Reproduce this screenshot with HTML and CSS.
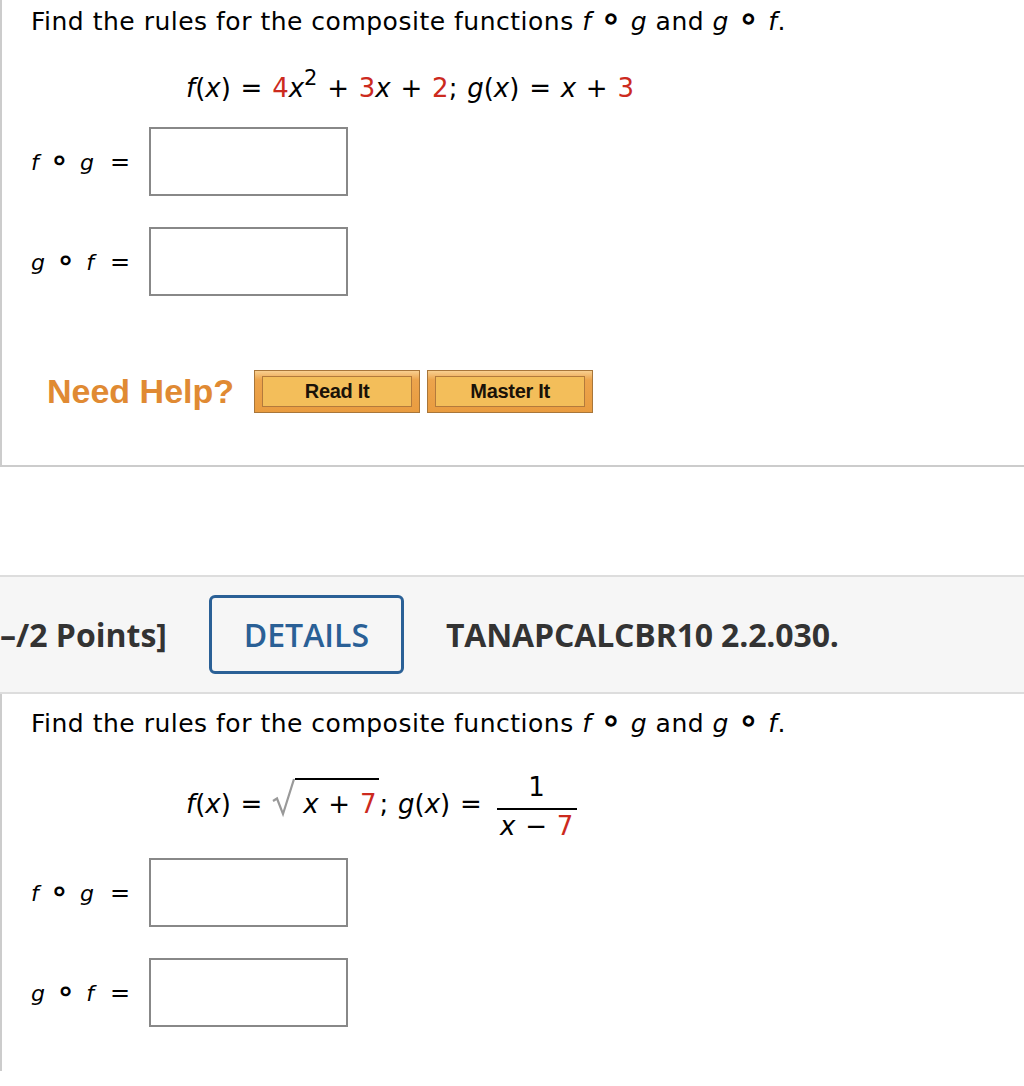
FILE: index.html
```html
<!DOCTYPE html>
<html lang="en">
<head>
  <meta charset="UTF-8" />
  <meta name="viewport" content="width=device-width, initial-scale=1" />
  <title>Composite functions</title>
  <link rel="stylesheet" href="styles.css">
</head>
<body>
  <div class="panel panel-first">
    <p class="prompt">Find the rules for the composite functions <i>f</i> <span class="ring">∘</span> <i>g</i> and <i>g</i> <span class="ring">∘</span> <i>f</i>.</p>

    <div class="formula">
      <i>f</i>(<i>x</i>) = <span class="red">4</span><i>x</i><sup>2</sup> + <span class="red">3</span><i>x</i> + <span class="red">2</span>; <i>g</i>(<i>x</i>) = <i>x</i> + <span class="red">3</span>
    </div>

    <div class="answers">
      <div class="answer-row">
        <span class="lbl"><i>f</i> <span class="ring">∘</span> <i>g</i> <span class="eq">=</span></span>
        <span class="box"></span>
      </div>
      <div class="answer-row">
        <span class="lbl"><i>g</i> <span class="ring">∘</span> <i>f</i> <span class="eq">=</span></span>
        <span class="box"></span>
      </div>
    </div>

    <div class="help">
      <span class="help-label">Need Help?</span>
      <button class="help-btn"><span>Read It</span></button>
      <button class="help-btn"><span>Master It</span></button>
    </div>
  </div>

  <div class="qhead">
    <span class="points">–/2 Points]</span>
    <button class="details">DETAILS</button>
    <span class="qid">TANAPCALCBR10 2.2.030.</span>
  </div>

  <div class="panel panel-second">
    <p class="prompt">Find the rules for the composite functions <i>f</i> <span class="ring">∘</span> <i>g</i> and <i>g</i> <span class="ring">∘</span> <i>f</i>.</p>

    <div class="formula formula-frac">
      <span><i>f</i>(<i>x</i>) = </span>
      <span class="sqrt">
        <svg class="radical" width="23" height="40" viewBox="0 0 23 40"><path d="M1 23 L5 20.5 L11 36 L22 1" fill="none" stroke="#999" stroke-width="2.2"/></svg><span class="radicand"><i>x</i> + <span class="red">7</span></span>
      </span>
      <span>; <i>g</i>(<i>x</i>) = </span>
      <span class="frac">
        <span class="num">1</span>
        <span class="den"><i>x</i> − <span class="red">7</span></span>
      </span>
    </div>

    <div class="answers">
      <div class="answer-row">
        <span class="lbl"><i>f</i> <span class="ring">∘</span> <i>g</i> <span class="eq">=</span></span>
        <span class="box"></span>
      </div>
      <div class="answer-row">
        <span class="lbl"><i>g</i> <span class="ring">∘</span> <i>f</i> <span class="eq">=</span></span>
        <span class="box"></span>
      </div>
    </div>
  </div>
</body>
</html>
```

FILE: styles.css
```css
body {
  margin: 0;
  background: #fff;
  color: #000;
  font-family: "DejaVu Sans", Verdana, sans-serif;
  overflow: hidden;
}
.panel {
  border-left: 2px solid #ccc;
  padding-left: 29px;
}
.panel-first {
  border-bottom: 2px solid #ccc;
  padding-top: 8px;
  padding-bottom: 52px;
}
.panel-second {
  padding-top: 16px;
  height: 377px;
  box-sizing: border-box;
}
.prompt {
  margin: 0;
  font-size: 25px;
  line-height: 28px;
  letter-spacing: 0.5px;
}
.ring {
  font-weight: bold;
  font-style: normal;
  font-size: 1.4em;
  line-height: 0;
}
.red {
  color: #cc2a1e;
}
.formula {
  margin: 38px 0 0 155px;
  font-size: 26px;
  line-height: 28px;
  word-spacing: 1.5px;
}
.formula sup {
  font-size: 21px;
  line-height: 0;
  vertical-align: 12px;
}
.answers {
  margin-top: 25px;
  display: flex;
  flex-direction: column;
  gap: 31px;
}
.answer-row {
  display: flex;
  align-items: center;
}
.lbl {
  width: 118px;
  font-size: 22px;
  word-spacing: 4px;
}
.lbl .eq {
  margin-left: 5px;
  font-size: 24px;
}
.box {
  width: 195px;
  height: 65px;
  border: 2px solid #888;
  background: #fff;
}
.help {
  margin-top: 74px;
  display: flex;
  align-items: center;
  padding-left: 16px;
}
.help-label {
  font-family: "Liberation Sans", Arial, sans-serif;
  font-weight: bold;
  font-size: 34px;
  color: #e08a33;
  margin-right: 20px;
}
.help-btn {
  width: 166px;
  height: 43px;
  margin-right: 7px;
  padding: 5px 7px;
  border: 1px solid #a8763a;
  background: linear-gradient(#f8cf90, #eca44c 22%, #e99c40);
  font-family: "Liberation Sans", Arial, sans-serif;
  font-weight: bold;
  font-size: 20px;
  letter-spacing: -0.3px;
  color: #1a1208;
  display: flex;
}
.help-btn span {
  flex: 1;
  border: 1px solid #b37a3c;
  background: #f3be5a;
  display: flex;
  align-items: center;
  justify-content: center;
}
.qhead {
  margin-top: 108px;
  height: 115px;
  border-top: 2px solid #ddd;
  border-bottom: 2px solid #ddd;
  background: #f6f6f6;
  display: flex;
  align-items: center;
  font-family: "Open Sans", sans-serif;
  color: #333;
}
.points {
  font-weight: bold;
  font-size: 32px;
}
.details {
  margin-left: 42px;
  width: 195px;
  height: 79px;
  border: 3px solid #2a6096;
  border-radius: 6px;
  background: #f6f6f6;
  color: #2a6096;
  font-family: "Open Sans", sans-serif;
  font-weight: 600;
  font-size: 32px;
}
.qid {
  margin-left: 42px;
  font-weight: bold;
  font-size: 32px;
  letter-spacing: -0.15px;
}
.formula-frac {
  margin-top: 29px;
  display: flex;
  align-items: center;
  white-space: pre;
}
.sqrt {
  display: inline-flex;
  align-items: flex-end;
  margin-bottom: 12px;
}
.radicand {
  border-top: 2px solid #000;
  padding: 10px 3px 0 8px;
}
.frac {
  display: inline-flex;
  flex-direction: column;
  align-items: center;
  margin: 6px 0 0 5px;
}
.frac .num {
  padding: 0 8px 7px;
}
.frac .den {
  border-top: 2px solid #000;
  padding: 2px 3.5px 0;
}
.panel-second .answers {
  margin-top: 18px;
}
```
